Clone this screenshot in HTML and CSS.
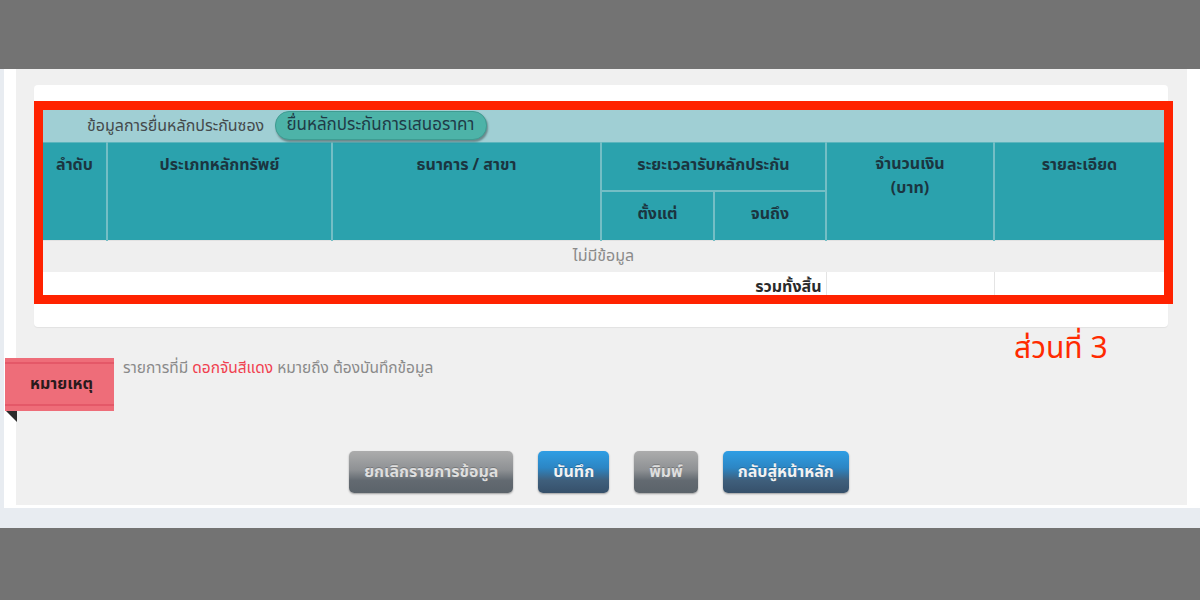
FILE: index.html
```html
<!DOCTYPE html>
<html lang="th">
<head>
<meta charset="utf-8">
<title>ส่วนที่ 3</title>
<link rel="stylesheet" href="styles.css">
</head>
<body>
<div class="band"></div>
<div class="stage">
  <div class="frame">
    <div class="panel">
      <div class="card">
        <table class="grid">
          <colgroup>
            <col class="c-no"><col class="c-type"><col class="c-bank"><col class="c-from"><col class="c-to"><col class="c-amt"><col class="c-detail">
          </colgroup>
          <thead>
            <tr class="caption-row">
              <th colspan="7" class="caption">
                <span class="caption-label">ข้อมูลการยื่นหลักประกันซอง</span>
                <span class="pill">ยื่นหลักประกันการเสนอราคา</span>
              </th>
            </tr>
            <tr class="head-row">
              <th rowspan="2">ลำดับ</th>
              <th rowspan="2">ประเภทหลักทรัพย์</th>
              <th rowspan="2">ธนาคาร / สาขา</th>
              <th colspan="2" class="period">ระยะเวลารับหลักประกัน</th>
              <th rowspan="2" class="amount">จำนวนเงิน<br>(บาท)</th>
              <th rowspan="2" class="last">รายละเอียด</th>
            </tr>
            <tr class="head-row sub">
              <th>ตั้งแต่</th>
              <th>จนถึง</th>
            </tr>
          </thead>
          <tbody>
            <tr class="empty-row">
              <td colspan="7">ไม่มีข้อมูล</td>
            </tr>
            <tr class="total-row">
              <td colspan="5" class="total-label">รวมทั้งสิ้น</td>
              <td class="cell"></td>
              <td class="cell"></td>
            </tr>
          </tbody>
        </table>
        <div class="highlight"></div>
      </div>

      <div class="note">
        <div class="ribbon">หมายเหตุ</div>
        <p class="note-text">รายการที่มี <span class="red">ดอกจันสีแดง</span> หมายถึง ต้องบันทึกข้อมูล</p>
      </div>

      <div class="actions">
        <button class="btn gray">ยกเลิกรายการข้อมูล</button>
        <button class="btn blue">บันทึก</button>
        <button class="btn gray">พิมพ์</button>
        <button class="btn blue">กลับสู่หน้าหลัก</button>
      </div>

      <div class="section-tag">ส่วนที่ 3</div>
    </div>
  </div>
</div>
<div class="band bottom"></div>
</body>
</html>
```

FILE: styles.css
```css
* { box-sizing: border-box; }

html, body {
  margin: 0;
  padding: 0;
  width: 1200px;
  height: 600px;
  overflow: hidden;
  font-family: Tahoma, "Noto Sans Thai", "Noto Sans", "DejaVu Sans", sans-serif;
}

.band {
  height: 69px;
  background: #737373;
}
.band.bottom {
  height: 72px;
}

.stage {
  height: 459px;
  background: #e8ecf1;
  padding-left: 4px;
}

.frame {
  height: 439px;
  background: #ffffff;
  padding: 0 13px 3px 12px;
}

.panel {
  position: relative;
  height: 436px;
  background: #f0f0f0;
  padding: 16px 19px 0 18px;
}

.card {
  position: relative;
  height: 242px;
  background: #ffffff;
  border-radius: 4px;
  box-shadow: 0 1px 1px rgba(0, 0, 0, 0.06);
  padding: 25px 4px 0 9px;
}

.grid {
  width: 1121px;
  border-collapse: collapse;
  table-layout: fixed;
}
.c-no { width: 64px; }
.c-type { width: 225px; }
.c-bank { width: 269px; }
.c-from { width: 113px; }
.c-to { width: 112px; }
.c-amt { width: 168px; }
.c-detail { width: 170px; }

.caption-row .caption {
  height: 32px;
  background: #a0cfd4;
  text-align: left;
  padding: 0 0 0 44px;
  font-weight: normal;
  vertical-align: middle;
}
.caption-label {
  font-size: 16px;
  color: #444a4c;
  vertical-align: middle;
}
.pill {
  display: inline-block;
  vertical-align: middle;
  margin-left: 7px;
  height: 29px;
  line-height: 27px;
  padding: 0 12px 0 10px;
  border-radius: 14px;
  background: #4db3a8;
  border: 1px solid #3f9c92;
  box-shadow: 1px 2px 2px rgba(0, 0, 0, 0.35);
  font-size: 17px;
  color: #1f3b47;
}

.head-row th {
  background: #2ba2ad;
  color: #1b3540;
  font-size: 16px;
  font-weight: bold;
  line-height: 19px;
  vertical-align: top;
  padding: 13px 4px 0;
  height: 49px;
  border-right: 2px solid #74bec5;
  border-top: 1px solid #5cb5bd;
}
.head-row th.amount {
  line-height: 24px;
  padding-top: 9px;
}
.head-row th.last { border-right: none; }
.head-row th.period {
  border-bottom: 2px solid #74bec5;
}
.head-row.sub th {
  padding-top: 13px;
  border-top: none;
}

.empty-row td {
  height: 32px;
  background: #efefef;
  text-align: center;
  color: #8a8a8a;
  font-size: 16px;
  border-top: 1px solid #e2e2e2;
}

.total-row td {
  height: 30px;
  background: #ffffff;
  font-size: 16px;
}
.total-row .total-label {
  text-align: right;
  padding-right: 4px;
  font-weight: bold;
  color: #2a2a2a;
}
.total-row .cell {
  border-left: 1px solid #e4e4e4;
}

.highlight {
  position: absolute;
  left: 0;
  top: 16px;
  width: 1139px;
  height: 203px;
  border: 9px solid #ff2200;
  pointer-events: none;
}

.note {
  display: flex;
  align-items: flex-start;
  margin: 31px 0 0 -29px;
}
.ribbon {
  position: relative;
  width: 109px;
  height: 53px;
  line-height: 52px;
  text-align: center;
  font-size: 16px;
  font-weight: bold;
  color: #2a1a1c;
  background:
    linear-gradient(#ee6d79, #ee6d79) 0 6px / 100% 40px no-repeat,
    linear-gradient(#e45868, #e45868) 0 4px / 100% 44px no-repeat,
    #ee6d79;
  padding-left: 4px;
}
.ribbon::after {
  content: "";
  position: absolute;
  left: 1px;
  top: 100%;
  width: 0;
  height: 0;
  border-top: 11px solid #2b2b2b;
  border-left: 11px solid transparent;
}
.note-text {
  margin: 1px 0 0 9px;
  font-size: 15.5px;
  line-height: 20px;
  color: #8a8a8a;
}
.note-text .red {
  color: #f0404f;
}

.actions {
  display: flex;
  justify-content: center;
  gap: 25px;
  margin-top: 40px;
  padding-right: 4px;
}
.btn {
  height: 42px;
  padding: 0 15px;
  border-radius: 5px;
  border: none;
  font-family: inherit;
  font-size: 16px;
  font-weight: bold;
  color: #e6e6e6;
  box-shadow: 0 1px 2px rgba(0, 0, 0, 0.35);
  text-shadow: 0 -1px 0 rgba(0, 0, 0, 0.2);
}
.btn.gray {
  background: linear-gradient(#acacac 0%, #8e9194 45%, #636a71 70%, #5b636a 100%);
  color: #dedede;
}
.btn.blue {
  background: linear-gradient(#2f9ee4 0%, #2c86c4 40%, #3f5f7c 70%, #36506a 100%);
  color: #f2f2f2;
}

.section-tag {
  position: absolute;
  left: 998px;
  top: 262px;
  font-size: 30px;
  line-height: 36px;
  color: #ff2a00;
}
```
